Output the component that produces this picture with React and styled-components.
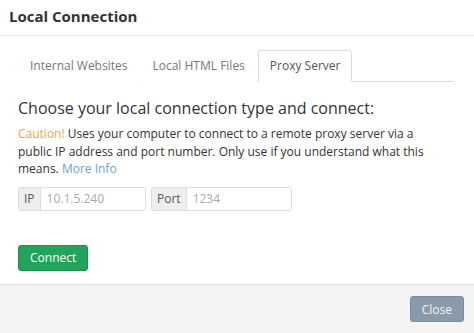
import React, { useState } from 'react'
import styled, { createGlobalStyle } from 'styled-components'

const Global = createGlobalStyle`
  html, body { margin: 0; padding: 0; background: #fff; }
  body { font-family: 'Open Sans', 'Noto Sans', sans-serif; color: #333; }
  * { box-sizing: border-box; }
`

const Modal = styled.div`
  width: 474px;
  height: 333px;
  display: flex;
  flex-direction: column;
  background: #fff;
`

const Header = styled.div`
  height: 36px;
  padding: 6px 9px 0;
  border-bottom: 1px solid #e6e6e6;
`

const Title = styled.h4`
  margin: 0;
  font-size: 15px;
  font-weight: 700;
  line-height: 20px;
  color: #333;
`

const Body = styled.div`
  flex: 1;
  padding: 14px 20px 0 18px;
`

const TabBar = styled.ul`
  display: flex;
  list-style: none;
  margin: 0;
  padding: 0;
  border-bottom: 1px solid #ddd;
  height: 32px;
`

const Tab = styled.li`
  margin-right: 1px;
  margin-bottom: -1px;
  padding: 0 11px;
  height: 32px;
  line-height: 29px;
  font-size: 12px;
  cursor: pointer;
  border: 1px solid ${p => (p.$active ? '#ddd' : 'transparent')};
  border-bottom-color: transparent;
  border-radius: 3px 3px 0 0;
  background: #fff;
  color: ${p => (p.$active ? '#555' : '#777')};
`

const Pane = styled.div`
  padding: 14px 24px 0 0;
`

const Heading = styled.h3`
  margin: 0 0 5px;
  font-size: 16px;
  font-weight: 400;
  line-height: 24px;
  color: #333;
`

const Text = styled.p`
  margin: 0 0 9px;
  font-size: 12px;
  line-height: 17.6px;
  color: #333;
`

const Caution = styled.span`
  color: #e3a64d;
`

const Link = styled.a`
  color: #6b9ecf;
  text-decoration: none;
`

const Fields = styled.div`
  display: flex;
  gap: 5px;
`

const Group = styled.div`
  display: flex;
  width: ${p => p.$w}px;
  height: 24px;
  border: 1px solid #ddd;
  border-radius: 3px;
  overflow: hidden;
`

const Addon = styled.span`
  display: flex;
  align-items: center;
  padding: 0 5px;
  background: #eee;
  border-right: 1px solid #ddd;
  font-size: 12px;
  color: #555;
`

const Input = styled.input`
  flex: 1;
  min-width: 0;
  border: none;
  outline: none;
  padding: 0 6px;
  font-family: inherit;
  font-size: 12px;
  color: #555;
  &::placeholder { color: #aaa; }
`

const ConnectButton = styled.button`
  margin-top: 34px;
  height: 26px;
  padding: 0 11px;
  border: 1px solid #1b8f48;
  border-radius: 3px;
  background: #22a45a;
  color: #fff;
  font-family: inherit;
  font-size: 12px;
  cursor: pointer;
`

const Footer = styled.div`
  height: 49px;
  border-top: 1px solid #e2e2e2;
  background: #f4f4f4;
  display: flex;
  justify-content: flex-end;
  align-items: center;
  padding: 0 10px;
`

const CloseButton = styled.button`
  height: 26px;
  padding: 0 11px;
  border: 1px solid #7e8d9d;
  border-radius: 3px;
  background: #8b9aab;
  color: #f2f4f6;
  font-family: inherit;
  font-size: 12px;
  cursor: pointer;
`

const tabs = ['Internal Websites', 'Local HTML Files', 'Proxy Server']

export default function App() {
  const [active, setActive] = useState(2)

  return (
    <Modal>
      <Global />
      <Header>
        <Title>Local Connection</Title>
      </Header>
      <Body>
        <TabBar>
          {tabs.map((t, i) => (
            <Tab key={t} $active={i === active} onClick={() => setActive(i)}>
              {t}
            </Tab>
          ))}
        </TabBar>
        <Pane>
          <Heading>Choose your local connection type and connect:</Heading>
          <Text>
            <Caution>Caution!</Caution> Uses your computer to connect to a remote proxy server via a
            public IP address and port number. Only use if you understand what this
            means. <Link href="#">More Info</Link>
          </Text>
          <Fields>
            <Group $w={128}>
              <Addon>IP</Addon>
              <Input placeholder="10.1.5.240" />
            </Group>
            <Group $w={141}>
              <Addon>Port</Addon>
              <Input placeholder="1234" />
            </Group>
          </Fields>
          <ConnectButton>Connect</ConnectButton>
        </Pane>
      </Body>
      <Footer>
        <CloseButton>Close</CloseButton>
      </Footer>
    </Modal>
  )
}
